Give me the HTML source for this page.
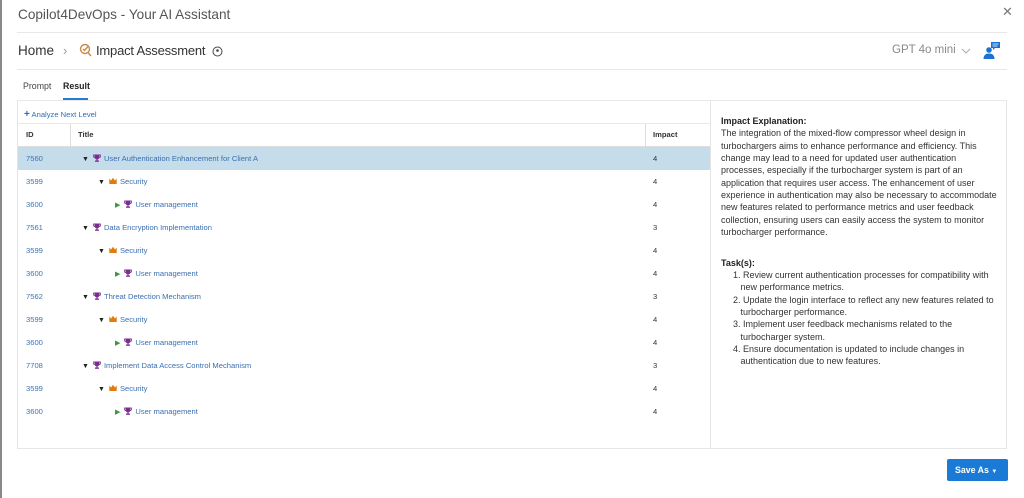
<!DOCTYPE html>
<html><head><meta charset="utf-8"><style>
*{margin:0;padding:0;box-sizing:border-box}
body{width:1024px;height:498px;background:#fff;font-family:"Liberation Sans",sans-serif;position:relative;overflow:hidden;color:#333}
.a{position:absolute;white-space:nowrap}
.hl{position:absolute;height:1px;background:#e8e8e8}
.row{position:absolute;left:18px;width:692px;height:23px;font-size:7.6px;line-height:23px;color:#2b6cb0}
.row .id{position:absolute;left:8px;color:#3a75b6}
.row .im{position:absolute;left:635px;color:#333}
.row .t{position:absolute;color:#3b6fb0}
.tri{display:inline-block;font-size:7px;color:#222;margin-right:4px}
.trg{display:inline-block;font-size:7px;color:#3a9a3a;margin-right:4px}
svg.ic{display:inline-block;vertical-align:-1px;margin-right:3px}
.rt{font-size:9px;line-height:12.35px;color:#333}
</style></head><body>
<svg width="0" height="0" style="position:absolute"><defs>
<symbol id="tr" viewBox="0 0 8 8"><path d="M1.5 0.5h5v2.5c0 1.4-1.1 2.3-2.5 2.3S1.5 4.4 1.5 3z" fill="#7b2d8f"/><path d="M1.5 1H0.3v1c0 1 .7 1.5 1.5 1.5M6.5 1h1.2v1c0 1-.7 1.5-1.5 1.5" stroke="#7b2d8f" stroke-width=".7" fill="none"/><rect x="3.4" y="5" width="1.2" height="1.5" fill="#7b2d8f"/><rect x="2" y="6.5" width="4" height="1.3" fill="#7b2d8f"/></symbol>
<symbol id="cr" viewBox="0 0 8 8"><path d="M0.3 1.5l1.8 2 1.9-2.7 1.9 2.7 1.8-2V7H0.3z" fill="#e07b10"/></symbol>
</defs></svg>
<div class="a" style="left:0;top:0;width:2px;height:498px;background:#888"></div>
<div class="a" style="left:18px;top:7px;font-size:13.6px;color:#555">Copilot4DevOps - Your AI Assistant</div>
<div class="a" style="left:1002px;top:4px;font-size:13px;color:#777">✕</div>
<div class="hl" style="left:17px;top:32px;width:990px"></div>
<div class="a" style="left:18px;top:43px;font-size:13.5px;color:#333">Home</div>
<div class="a" style="left:63px;top:43px;font-size:13px;color:#999">›</div>
<svg class="a" style="left:79px;top:43px" width="13" height="14" viewBox="0 0 13 14"><circle cx="6" cy="6" r="4.5" fill="none" stroke="#c78a4a" stroke-width="1.4"/><path d="M4 6l1.5 1.5L9 3.5M9 9.5l3 3.5" stroke="#c78a4a" stroke-width="1.4" fill="none"/></svg>
<div class="a" style="left:96px;top:43px;font-size:13px;color:#333;letter-spacing:-0.2px">Impact Assessment</div>
<svg class="a" style="left:212px;top:46px" width="11" height="11"><circle cx="5.5" cy="5.5" r="4.5" fill="none" stroke="#444"/><circle cx="5.5" cy="4.5" r="1.3" fill="#444"/></svg>
<div class="a" style="left:892px;top:44px;font-size:11.5px;color:#888">GPT 4o mini</div>
<svg class="a" style="left:961px;top:48px" width="10" height="6"><path d="M1 1l4 4 4-4" stroke="#aaa" fill="none"/></svg>
<svg class="a" style="left:983px;top:42px" width="17" height="17" viewBox="0 0 17 17"><rect x="8" y="0" width="9" height="6" fill="#1a73d0"/><path d="M10 6v2l2-2" fill="#1a73d0"/><path d="M9.5 2h6M9.5 4h5" stroke="#fff" stroke-width=".8"/><circle cx="6" cy="8" r="2.8" fill="#1a73d0"/><path d="M0.5 17c0-4 2.5-5.5 5.5-5.5s5.5 1.5 5.5 5.5z" fill="#1a73d0"/></svg>
<div class="hl" style="left:17px;top:69px;width:990px"></div>
<div class="a" style="left:23px;top:81px;font-size:8.8px;color:#444">Prompt</div>
<div class="a" style="left:63px;top:81px;font-size:8.8px;color:#222;font-weight:bold">Result</div>
<div class="a" style="left:63px;top:98px;width:25px;height:2px;background:#2a7ad0"></div>
<div class="hl" style="left:17px;top:100px;width:990px"></div>
<div class="a" style="left:17px;top:101px;width:990px;height:348px;border:1px solid #e6e6e6;border-top:none"></div>
<div class="a" style="left:710px;top:101px;width:1px;height:348px;background:#e6e6e6"></div>
<div class="a" style="left:24px;top:109px;font-size:7.6px;color:#2d6fb3"><span style="font-size:10px;font-weight:bold">+</span> Analyze Next Level</div>
<div class="hl" style="left:18px;top:123px;width:692px"></div>
<div class="a" style="left:70px;top:124px;width:1px;height:22px;background:#ddd"></div>
<div class="a" style="left:645px;top:124px;width:1px;height:22px;background:#ddd"></div>
<div class="a" style="left:26px;top:130px;font-size:7.6px;font-weight:bold;color:#333">ID</div>
<div class="a" style="left:78px;top:130px;font-size:7.6px;font-weight:bold;color:#333">Title</div>
<div class="a" style="left:653px;top:130px;font-size:7.6px;font-weight:bold;color:#333">Impact</div>
<div class="hl" style="left:18px;top:146px;width:692px;background:#ddd"></div>

<div class="row" style="top:147px;background:#c5dcea"><span class="id">7560</span><span class="t" style="left:64px"><span class="tri">▼</span><svg class="ic" width="8" height="8"><use href="#tr"/></svg>User Authentication Enhancement for Client A</span><span class="im">4</span></div>
<div class="row" style="top:170px"><span class="id">3599</span><span class="t" style="left:80px"><span class="tri">▼</span><svg class="ic" width="8" height="8"><use href="#cr"/></svg>Security</span><span class="im">4</span></div>
<div class="row" style="top:193px"><span class="id">3600</span><span class="t" style="left:97px"><span class="trg">▶</span><svg class="ic" width="8" height="8"><use href="#tr"/></svg>User management</span><span class="im">4</span></div>
<div class="row" style="top:216px"><span class="id">7561</span><span class="t" style="left:64px"><span class="tri">▼</span><svg class="ic" width="8" height="8"><use href="#tr"/></svg>Data Encryption Implementation</span><span class="im">3</span></div>
<div class="row" style="top:239px"><span class="id">3599</span><span class="t" style="left:80px"><span class="tri">▼</span><svg class="ic" width="8" height="8"><use href="#cr"/></svg>Security</span><span class="im">4</span></div>
<div class="row" style="top:262px"><span class="id">3600</span><span class="t" style="left:97px"><span class="trg">▶</span><svg class="ic" width="8" height="8"><use href="#tr"/></svg>User management</span><span class="im">4</span></div>
<div class="row" style="top:285px"><span class="id">7562</span><span class="t" style="left:64px"><span class="tri">▼</span><svg class="ic" width="8" height="8"><use href="#tr"/></svg>Threat Detection Mechanism</span><span class="im">3</span></div>
<div class="row" style="top:308px"><span class="id">3599</span><span class="t" style="left:80px"><span class="tri">▼</span><svg class="ic" width="8" height="8"><use href="#cr"/></svg>Security</span><span class="im">4</span></div>
<div class="row" style="top:331px"><span class="id">3600</span><span class="t" style="left:97px"><span class="trg">▶</span><svg class="ic" width="8" height="8"><use href="#tr"/></svg>User management</span><span class="im">4</span></div>
<div class="row" style="top:354px"><span class="id">7708</span><span class="t" style="left:64px"><span class="tri">▼</span><svg class="ic" width="8" height="8"><use href="#tr"/></svg>Implement Data Access Control Mechanism</span><span class="im">3</span></div>
<div class="row" style="top:377px"><span class="id">3599</span><span class="t" style="left:80px"><span class="tri">▼</span><svg class="ic" width="8" height="8"><use href="#cr"/></svg>Security</span><span class="im">4</span></div>
<div class="row" style="top:400px"><span class="id">3600</span><span class="t" style="left:97px"><span class="trg">▶</span><svg class="ic" width="8" height="8"><use href="#tr"/></svg>User management</span><span class="im">4</span></div>

<div class="a rt" style="left:721px;top:115px"><b style="color:#222">Impact Explanation:</b><br>The integration of the mixed-flow compressor wheel design in<br>turbochargers aims to enhance performance and efficiency. This<br>change may lead to a need for updated user authentication<br>processes, especially if the turbocharger system is part of an<br>application that requires user access. The enhancement of user<br>experience in authentication may also be necessary to accommodate<br>new features related to performance metrics and user feedback<br>collection, ensuring users can easily access the system to monitor<br>turbocharger performance.</div>
<div class="a rt" style="left:721px;top:257px"><b style="color:#222">Task(s):</b></div>
<div class="a rt" style="left:733px;top:269px">1. Review current authentication processes for compatibility with<br>&nbsp;&nbsp;&nbsp;new performance metrics.<br>2. Update the login interface to reflect any new features related to<br>&nbsp;&nbsp;&nbsp;turbocharger performance.<br>3. Implement user feedback mechanisms related to the<br>&nbsp;&nbsp;&nbsp;turbocharger system.<br>4. Ensure documentation is updated to include changes in<br>&nbsp;&nbsp;&nbsp;authentication due to new features.</div>

<div class="a" style="left:947px;top:459px;width:61px;height:22px;background:#1a7ad6;border-radius:2px;color:#fff;font-size:8.8px;font-weight:bold;line-height:22px;padding-left:8px">Save As <span style="font-size:6px">▼</span></div>
</body></html>
